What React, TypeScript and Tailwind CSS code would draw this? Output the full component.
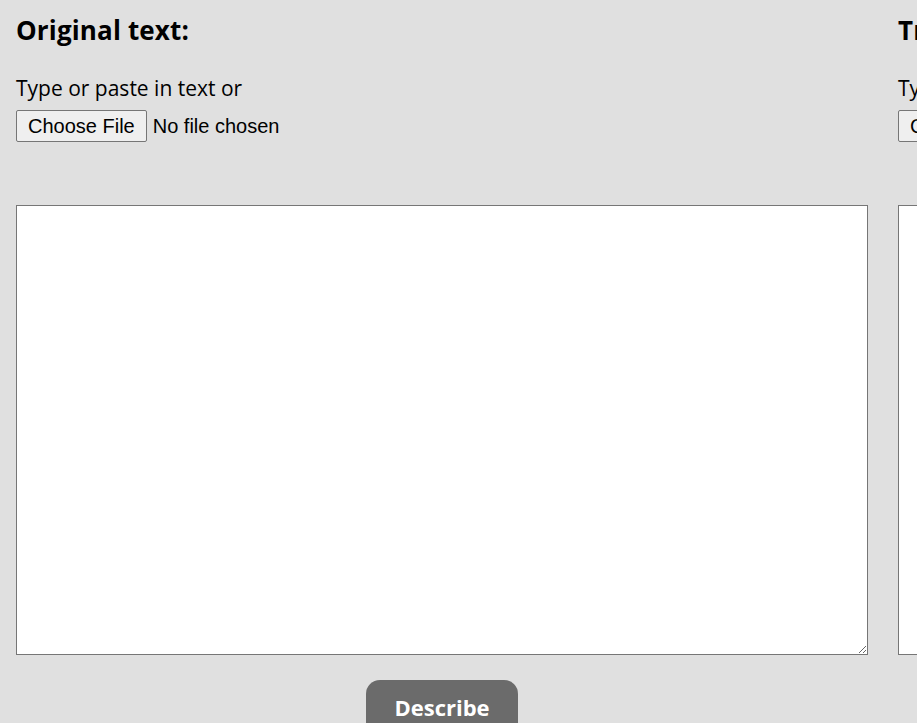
import React from "react";

function Column({ title }: { title: string }) {
  return (
    <div className="w-[852px] shrink-0 flex flex-col">
      <h2 className="mt-[13px] text-[26px] leading-[34px] font-bold text-black tracking-[0.15px]" style={{ fontFamily: '"Open Sans", sans-serif' }}>
        {title}
      </h2>
      <p className="mt-[29px] text-[21px] leading-[24px] text-black" style={{ fontFamily: '"Open Sans", sans-serif' }}>
        Type or paste in text or
      </p>
      <div className="mt-[10px] flex items-center" style={{ fontFamily: '"Liberation Sans", Arial, sans-serif' }}>
        <span className="h-[32px] flex items-center pl-[11px] pr-[11px] border border-[#767676] rounded-[2px] bg-[#efefef] text-[20px] text-black">
          Choose File
        </span>
        <span className="ml-[6px] text-[20px] text-black">No file chosen</span>
      </div>
      <textarea className="mt-[63px] h-[450px] w-full border border-[#767676] bg-white outline-none" />
      <div className="flex justify-center mt-[25px]">
        <button
          className="w-[152px] h-[56px] rounded-[14px] bg-[#6b6b6b] text-white text-[22px] font-bold pb-[2px]"
          style={{ fontFamily: '"Open Sans", sans-serif' }}
        >
          Describe
        </button>
      </div>
    </div>
  );
}

export default function App() {
  return (
    <div className="w-[917px] h-[723px] overflow-hidden bg-[#e0e0e0]">
      <div className="flex gap-[30px] pl-[16px]">
        <Column title="Original text:" />
        <Column title="Translated text:" />
      </div>
    </div>
  );
}
